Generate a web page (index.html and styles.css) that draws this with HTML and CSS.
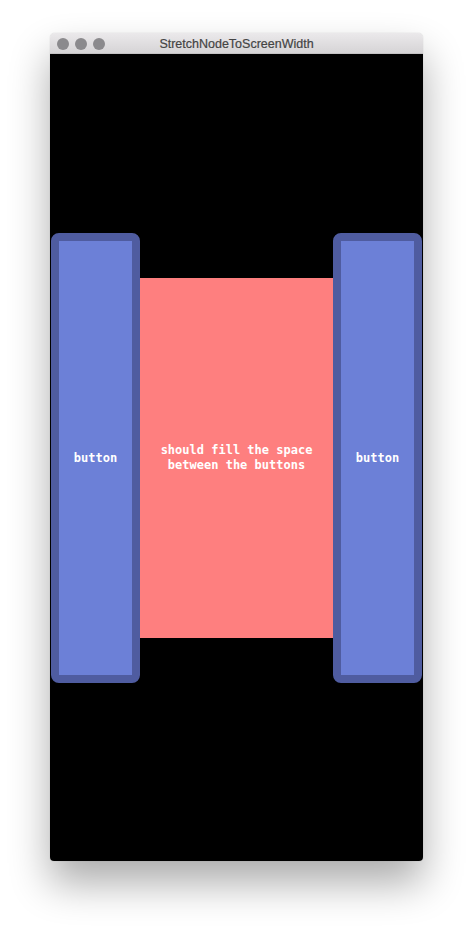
FILE: index.html
```html
<!DOCTYPE html>
<html lang="en">
<head>
    <meta charset="UTF-8">
    <meta name="viewport" content="width=device-width, initial-scale=1.0">
    <title>StretchNodeToScreenWidth</title>
    <link rel="stylesheet" href="styles.css">
</head>
<body>
    <div class="window">
        <div class="titlebar">
            <div class="lights">
                <span class="light"></span>
                <span class="light"></span>
                <span class="light"></span>
            </div>
            <div class="title">StretchNodeToScreenWidth</div>
        </div>
        <div class="content">
            <div class="button">button</div>
            <div class="filler">should fill the space<br>between the buttons</div>
            <div class="button">button</div>
        </div>
    </div>
</body>
</html>
```

FILE: styles.css
```css
body {
    margin: 0;
    padding: 33px 0 67px 50px;
    background: #ffffff;
}
.window {
    width: 373px;
    border-radius: 5px 5px 4px 4px;
    overflow: hidden;
    box-shadow: 0 22px 40px rgba(0,0,0,0.33), 0 0 1px rgba(0,0,0,0.3);
}
.titlebar {
    position: relative;
    height: 21px;
    background: linear-gradient(#ebe9eb, #d6d4d6);
    border-bottom: 1px solid #c4c2c4;
    box-sizing: border-box;
    display: flex;
    align-items: center;
    justify-content: center;
}
.lights {
    position: absolute;
    left: 7px;
    top: 5px;
    display: flex;
    gap: 6px;
}
.light {
    width: 12px;
    height: 12px;
    border-radius: 50%;
    background: #8b8a8d;
}
.title {
    font-family: "Liberation Sans", Arial, sans-serif;
    font-size: 12.5px;
    padding-top: 1px;
    color: #444;
    -webkit-text-stroke: 0.2px #444;
}
.content {
    height: 807px;
    background: #000;
    padding: 0 1px;
    display: flex;
    align-items: center;
}
.button {
    width: 89px;
    height: 450px;
    box-sizing: border-box;
    border: 8px solid #4f5ca0;
    border-radius: 8px;
    background: #6c80d7;
    display: flex;
    align-items: center;
    justify-content: center;
    font-family: "DejaVu Sans Mono", monospace;
    font-weight: bold;
    font-size: 12px;
    color: #fff;
}
.filler {
    flex: 1;
    height: 360px;
    background: #fe7f7f;
    display: flex;
    align-items: center;
    justify-content: center;
    text-align: center;
    font-family: "DejaVu Sans Mono", monospace;
    font-weight: bold;
    font-size: 12px;
    line-height: 15px;
    color: #fff;
}
```
